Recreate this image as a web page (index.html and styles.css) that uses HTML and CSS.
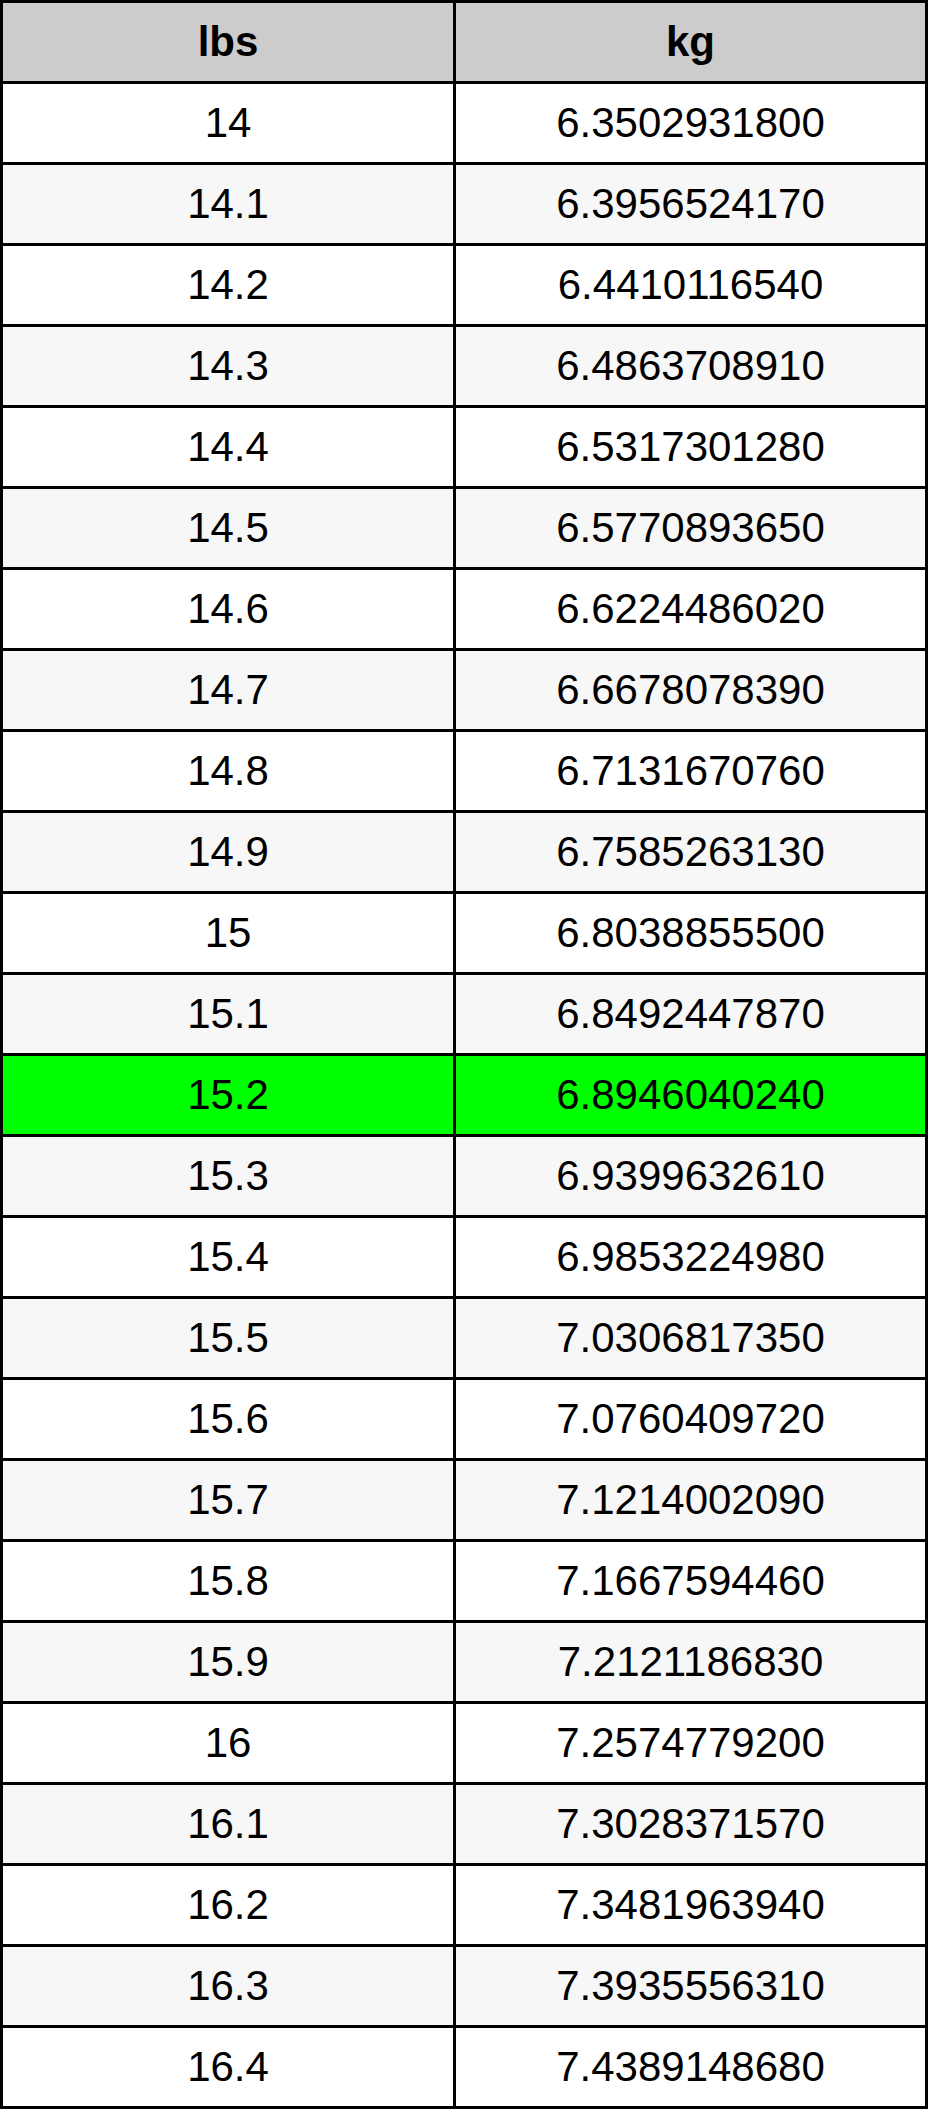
FILE: index.html
```html
<!DOCTYPE html>
<html>
<head>
<meta charset="utf-8">
<link rel="stylesheet" href="styles.css">
</head>
<body>
<div class="table">
  <div class="cell head">lbs</div><div class="cell head">kg</div>
  <div class="cell">14</div><div class="cell">6.3502931800</div>
  <div class="cell alt">14.1</div><div class="cell alt">6.3956524170</div>
  <div class="cell">14.2</div><div class="cell">6.4410116540</div>
  <div class="cell alt">14.3</div><div class="cell alt">6.4863708910</div>
  <div class="cell">14.4</div><div class="cell">6.5317301280</div>
  <div class="cell alt">14.5</div><div class="cell alt">6.5770893650</div>
  <div class="cell">14.6</div><div class="cell">6.6224486020</div>
  <div class="cell alt">14.7</div><div class="cell alt">6.6678078390</div>
  <div class="cell">14.8</div><div class="cell">6.7131670760</div>
  <div class="cell alt">14.9</div><div class="cell alt">6.7585263130</div>
  <div class="cell">15</div><div class="cell">6.8038855500</div>
  <div class="cell alt">15.1</div><div class="cell alt">6.8492447870</div>
  <div class="cell hl">15.2</div><div class="cell hl">6.8946040240</div>
  <div class="cell alt">15.3</div><div class="cell alt">6.9399632610</div>
  <div class="cell">15.4</div><div class="cell">6.9853224980</div>
  <div class="cell alt">15.5</div><div class="cell alt">7.0306817350</div>
  <div class="cell">15.6</div><div class="cell">7.0760409720</div>
  <div class="cell alt">15.7</div><div class="cell alt">7.1214002090</div>
  <div class="cell">15.8</div><div class="cell">7.1667594460</div>
  <div class="cell alt">15.9</div><div class="cell alt">7.2121186830</div>
  <div class="cell">16</div><div class="cell">7.2574779200</div>
  <div class="cell alt">16.1</div><div class="cell alt">7.3028371570</div>
  <div class="cell">16.2</div><div class="cell">7.3481963940</div>
  <div class="cell alt">16.3</div><div class="cell alt">7.3935556310</div>
  <div class="cell">16.4</div><div class="cell">7.4389148680</div>
</div>
</body>
</html>
```
FILE: styles.css
```css
html, body {
  margin: 0;
  padding: 0;
  background: #ffffff;
}
.table {
  width: 928px;
  box-sizing: border-box;
  display: grid;
  grid-template-columns: 453px 472px;
  grid-auto-rows: 81px;
  border-left: 3px solid #000;
  border-top: 3px solid #000;
  font-family: "Liberation Sans", Arial, sans-serif;
  font-size: 42px;
  color: #000;
}
.cell {
  box-sizing: border-box;
  border-right: 3px solid #000;
  border-bottom: 3px solid #000;
  display: flex;
  align-items: center;
  justify-content: center;
  background: #ffffff;
}
.head {
  background: #cccccc;
  font-weight: bold;
}
.alt {
  background: #f7f7f7;
}
.hl {
  background: #00ff00;
}
```
